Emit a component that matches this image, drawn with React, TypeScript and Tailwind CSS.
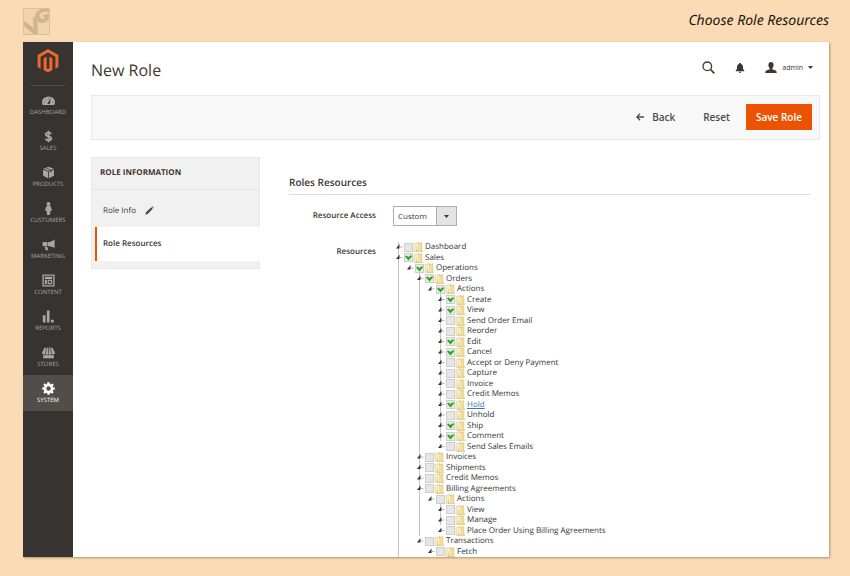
import type { ReactNode } from "react";

type Resource = { label: string; depth: number; checked?: boolean; active?: boolean };

const resources: Resource[] = [
  { label: "Dashboard", depth: 0 },
  { label: "Sales", depth: 0, checked: true },
  { label: "Operations", depth: 1, checked: true },
  { label: "Orders", depth: 2, checked: true },
  { label: "Actions", depth: 3, checked: true },
  { label: "Create", depth: 4, checked: true },
  { label: "View", depth: 4, checked: true },
  { label: "Send Order Email", depth: 4 },
  { label: "Reorder", depth: 4 },
  { label: "Edit", depth: 4, checked: true },
  { label: "Cancel", depth: 4, checked: true },
  { label: "Accept or Deny Payment", depth: 4 },
  { label: "Capture", depth: 4 },
  { label: "Invoice", depth: 4 },
  { label: "Credit Memos", depth: 4 },
  { label: "Hold", depth: 4, checked: true, active: true },
  { label: "Unhold", depth: 4 },
  { label: "Ship", depth: 4, checked: true },
  { label: "Comment", depth: 4, checked: true },
  { label: "Send Sales Emails", depth: 4 },
  { label: "Invoices", depth: 2 },
  { label: "Shipments", depth: 2 },
  { label: "Credit Memos", depth: 2 },
  { label: "Billing Agreements", depth: 2 },
  { label: "Actions", depth: 3 },
  { label: "View", depth: 4 },
  { label: "Manage", depth: 4 },
  { label: "Place Order Using Billing Agreements", depth: 4 },
  { label: "Transactions", depth: 2 },
  { label: "Fetch", depth: 3 },
];

const guideWidths = ["w-[11px]", "w-[10px]", "w-[11px]", "w-[10px]"];

/* A guide runs past a row when a later sibling exists at that depth. */
function hasGuide(index: number, depth: number) {
  if (depth === 0) return true;
  for (let i = index + 1; i < resources.length; i++) {
    if (resources[i].depth === depth) return true;
    if (resources[i].depth < depth) return false;
  }
  return false;
}

function Toggle({ line }: { line: boolean }) {
  return (
    <svg className="h-full w-[11px] shrink-0" viewBox="0 0 11 11" preserveAspectRatio="xMidYMid slice" aria-hidden="true">
      {line && <path d="M5.500 0V11" stroke="#c4c4c4" />}
      <path d="M7 5.500H9.500" stroke="#b4b4b4" />
      <path d="M6.500 2.500V7H3Z" fill="#333" />
    </svg>
  );
}

function Folder() {
  return (
    <svg className="h-[10px] w-[10px] shrink-0" viewBox="0 0 10 10" aria-hidden="true">
      <path d="M1 1.500L5.500 .5V8.500L1 9.500Z" fill="#f8edc2" stroke="#dccb90" strokeWidth=".6" />
      <path d="M5 1.500L8.800 .8V7.500L9.600 9.500H3Z" fill="#f1df9f" stroke="#d0b973" strokeWidth=".6" />
      <path d="M4.500 2V8" stroke="#fdf8e0" strokeWidth=".8" />
    </svg>
  );
}

function TreeRow({ item, index }: { item: Resource; index: number }) {
  const id = `resource-${index}`;
  return (
    <li className="flex h-[10px] items-center even:h-[11px]">
      {guideWidths.slice(0, item.depth).map((width, depth) => (
        <span key={depth} className={`${width} flex h-full shrink-0 pl-[5px]`}>
          {hasGuide(index, depth) && <span className="h-full border-l border-[#c4c4c4]" />}
        </span>
      ))}
      <Toggle line={hasGuide(index, item.depth)} />
      <span className="grid shrink-0 place-items-center">
        <input
          type="checkbox"
          defaultChecked={item.checked}
          aria-labelledby={id}
          className="peer col-start-1 row-start-1 size-[9px] appearance-none border border-[#cdcdcd] bg-[#e6e6e6] checked:bg-[#e3eedf]"
        />
        <svg className="pointer-events-none invisible col-start-1 row-start-1 size-[9px] peer-checked:visible" viewBox="0 0 9 9" aria-hidden="true">
          <path d="M1 3.500L2.500 2.500L4.300 4L6.800 2.200L8.300 3L4.500 7.500Z" fill="#2fa32b" />
        </svg>
      </span>
      <Folder />
      <a
        id={id}
        href="#"
        className={`ml-[2px] text-[8px] leading-[10px] whitespace-nowrap ${item.active ? "text-[#3a78b0] underline" : "text-[#333]"}`}
      >
        {item.label}
      </a>
    </li>
  );
}

const menu: { label: string; active?: boolean; icon: ReactNode }[] = [
  {
    label: "DASHBOARD",
    icon: (
      <>
        <path d="M1 13.500C.5 12.500 0 11.300 0 10A8 7 0 0 1 16 10C16 11.300 15.500 12.500 15 13.500Z" />
        <path d="M6.500 12L11 4.500L9.500 12.300Z" fill="#373330" />
        <path d="M2.500 10h1.200M4.200 6l.9.9M8 4.500v1M12.500 10h1.200" stroke="#373330" strokeWidth=".8" />
      </>
    ),
  },
  {
    label: "SALES",
    icon: (
      <path
        d="M11.300 5C10.800 3.800 9.700 3.200 8 3.200C6 3.200 4.700 4 4.700 5.500C4.700 8.600 11.500 7 11.500 10.300C11.500 11.900 10.100 12.800 8 12.800C6 12.800 4.800 12 4.400 10.700M8 .8V15.200"
        fill="none"
        stroke="currentColor"
        strokeWidth="2.200"
      />
    ),
  },
  {
    label: "PRODUCTS",
    icon: (
      <>
        <path d="M8 1L14.500 3.500L8 6.300L1.500 3.500Z" />
        <path d="M1.300 4.500L7.500 7.200V15L1.300 12Z" />
        <path d="M14.700 4.500L8.500 7.200V15L14.700 12Z" />
        <path d="M4.300 2.300L11.300 5.200V8" fill="none" stroke="#373330" strokeWidth=".9" />
      </>
    ),
  },
  {
    label: "CUSTOMERS",
    icon: (
      <>
        <circle cx="8" cy="2.500" r="2.500" />
        <path d="M5.500 5H10.500L12.300 10L11.200 11L10.300 10.300V12L9.700 16H6.300L5.700 12V10.300L4.800 11L3.700 10Z" />
      </>
    ),
  },
  {
    label: "MARKETING",
    icon: (
      <>
        <path d="M15.500 1.500V12.300C13 10.500 10.500 10 7.500 10V5C10.500 5 13 3.800 15.500 1.500Z" />
        <path d="M.8 5H6.700V10H.8Z" />
        <path d="M3.300 10.700H6.500L7.700 15H4.500Z" />
      </>
    ),
  },
  {
    label: "CONTENT",
    icon: (
      <>
        <path d="M.5 .5H15.500V15.500H.5ZM2.200 2.200V13.800H13.800V2.200Z" fillRule="evenodd" />
        <path d="M3.500 3.500H12.500V6H3.500ZM3.500 7H6V12.500H3.500ZM7 7H12.500V12.500H7Z" />
        <path d="M8.500 8.500H11V11H8.500Z" fill="#373330" />
      </>
    ),
  },
  {
    label: "REPORTS",
    icon: <path d="M1 6.500H4.300V15.500H1ZM6 .5H9.300V15.500H6ZM11 12H14.500V15.500H11Z" />,
  },
  {
    label: "STORES",
    icon: (
      <>
        <path d="M3 2H13L15.800 8A1.950 1.950 0 0 1 11.900 8.800A1.950 1.950 0 0 1 8 8.800A1.950 1.950 0 0 1 4.100 8.800A1.950 1.950 0 0 1 .2 8Z" />
        <path d="M1.500 11.300H14.500V15.200H1.500Z" />
        <path d="M5.500 2.500L4.300 9M8 2.500V9M10.500 2.500L11.700 9" stroke="#373330" strokeWidth=".9" />
      </>
    ),
  },
  {
    label: "SYSTEM",
    active: true,
    icon: (
      <path
        fillRule="evenodd"
        d="M6.600 .3H9.400L9.800 2.500L10.900 3L12.800 1.700L14.500 3.400L13.100 5.200L13.500 6.400L15.700 6.800V9.300L13.500 9.700L13.100 10.900L14.400 12.700L12.600 14.500L10.800 13.200L9.700 13.600L9.300 15.700H6.700L6.300 13.600L5.200 13.200L3.400 14.500L1.600 12.700L2.900 10.900L2.500 9.700L.3 9.300V6.800L2.500 6.400L3 5.200L1.600 3.400L3.400 1.600L5.200 3L6.200 2.500ZM8 5.300A2.700 2.700 0 1 0 8 10.700A2.700 2.700 0 1 0 8 5.300Z"
      />
    ),
  },
];

function Sidebar() {
  return (
    <nav className="w-[50px] shrink-0 bg-[#373330]">
      <div className="px-2">
        <a href="#" aria-label="Magento" className="flex h-11 justify-center border-b border-[#55504c] pt-[7px]">
          <svg className="h-6 w-[22px]" viewBox="0 0 22 24" fill="#ee672d" aria-hidden="true">
            <path d="M11 0L21.400 6V18L18.400 19.700V7.700L11 3.400L3.600 7.700V19.700L.6 18V6Z" />
            <path d="M6.600 9.200L9.600 7.500V19.300L11 20.100L12.400 19.300V7.500L15.400 9.200V21L11 23.600L6.600 21Z" />
          </svg>
        </a>
      </div>
      <ul className="pt-px">
        {menu.map((item) => (
          <li key={item.label}>
            <a
              href="#"
              className={`flex h-9 flex-col items-center pt-[7px] ${item.active ? "bg-[#524d49] text-white" : "text-[#aaa6a0]"}`}
            >
              <svg className="size-[13px]" viewBox="0 0 16 16" fill="currentColor" aria-hidden="true">
                {item.icon}
              </svg>
              <span className="text-[6px] leading-[10px]">{item.label}</span>
            </a>
          </li>
        ))}
      </ul>
    </nav>
  );
}

function Header() {
  return (
    <header className="flex h-[53px] items-center justify-between pr-4 pl-[18px] text-[#41362f]">
      <h1 className="pt-[2px] text-[16px] leading-6">New Role</h1>
      <div className="flex items-center pb-[2px]">
        <button type="button" aria-label="Search">
          <svg className="size-[13px]" viewBox="0 0 13 13" fill="none" stroke="currentColor" aria-hidden="true">
            <circle cx="5.300" cy="5.300" r="4.300" strokeWidth="1.300" />
            <path d="M8.500 8.500L12.300 12.300" strokeWidth="1.700" />
          </svg>
        </button>
        <button type="button" aria-label="Notifications" className="ml-5">
          <svg className="size-[10px]" viewBox="0 0 10 10" fill="currentColor" aria-hidden="true">
            <path d="M5 0C5.600 0 6 .4 6 1C7.600 1.500 8 2.800 8 4.500C8 6 8.500 6.800 9.300 7.600V8.200H.7V7.600C1.500 6.800 2 6 2 4.500C2 2.800 2.400 1.500 4 1C4 .4 4.400 0 5 0ZM3.800 8.800H6.200C6 9.600 5.600 10 5 10S4 9.600 3.800 8.800Z" />
          </svg>
        </button>
        <button type="button" className="ml-5 flex items-center">
          <svg className="h-[11px] w-3" viewBox="0 0 12 11" fill="currentColor" aria-hidden="true">
            <path d="M6 0C7.700 0 8.600 1.200 8.600 3C8.600 4.400 8 5.700 7.300 6.300V7.300L10.500 8.500C11.300 8.900 11.700 9.600 11.700 11H.3C.3 9.600 .7 8.900 1.500 8.500L4.700 7.300V6.300C4 5.700 3.400 4.400 3.400 3C3.400 1.200 4.300 0 6 0Z" />
          </svg>
          <span className="ml-[5px] text-[7px] leading-3">admin</span>
          <svg className="ml-[5px] h-[3px] w-[5px]" viewBox="0 0 5 3" fill="currentColor" aria-hidden="true">
            <path d="M0 0H5L2.500 3Z" />
          </svg>
        </button>
      </div>
    </header>
  );
}

function Toolbar() {
  return (
    <div className="mr-[9px] ml-[18px] flex h-[45px] items-center justify-end border border-[#e9e9e9] bg-[#f8f8f8] pr-[7px] pb-px text-[10px] leading-4 font-semibold text-[#514943]">
      <button type="button" className="flex items-center">
        <svg className="mr-2 size-[8px]" viewBox="0 0 8 8" fill="none" stroke="currentColor" strokeWidth="1.300" aria-hidden="true">
          <path d="M8 4H1M4 .8L.9 4L4 7.200" />
        </svg>
        Back
      </button>
      <button type="button" className="ml-7">Reset</button>
      <button type="button" className="ml-4 h-[26px] bg-[#eb5202] px-[10px] text-white">Save Role</button>
    </div>
  );
}

function RoleTabs() {
  return (
    <aside className="w-[169px] shrink-0 self-start border border-[#e9e9e9] bg-[#f1f1f1] pb-[7px] text-[8px] text-[#41362f]">
      <h2 className="h-8 border-b border-[#e5e5e5] pl-2 leading-[30px] font-bold">ROLE INFORMATION</h2>
      <a href="#" className="flex h-[37px] items-center pt-1 pl-[11px]">
        Role Info
        <svg className="ml-[9px] size-[9px]" viewBox="0 0 9 9" fill="#514943" aria-hidden="true">
          <path d="M.3 8.700L1 6.300L6.200 1.200L7.800 2.700L2.700 7.900ZM6.700 .8L7.300 .3L8.700 1.700L8.200 2.300Z" />
        </svg>
      </a>
      <a href="#" className="-mr-px ml-[3px] flex h-[34px] items-center border-l-2 border-[#eb5202] bg-white pl-[6px] font-semibold">
        Role Resources
      </a>
    </aside>
  );
}

function ResourcesPanel() {
  return (
    <section className="min-w-0 flex-1 pt-[17px] text-[#41362f]">
      <h2 className="border-b border-[#dfdbd7] pb-1 text-[10px] leading-4 font-semibold">Roles Resources</h2>
      <div className="mt-[11px] flex items-center">
        <label htmlFor="access" className="w-[87px] text-right text-[8px] leading-[10px] font-semibold">
          Resource Access
        </label>
        <div className="ml-[17px] grid">
          <select
            id="access"
            className="col-start-1 row-start-1 h-5 w-16 appearance-none border border-[#adadad] bg-white pl-1 text-[8px] leading-4"
          >
            <option>Custom</option>
            <option>All</option>
          </select>
          <span className="pointer-events-none col-start-1 row-start-1 grid w-[21px] place-items-center justify-self-end border border-[#adadad] bg-[#e3e3e3]">
            <svg className="h-[3px] w-[5px]" viewBox="0 0 5 3" fill="#41362f" aria-hidden="true">
              <path d="M0 0H5L2.500 3Z" />
            </svg>
          </span>
        </div>
      </div>
      <div className="mt-4 flex">
        <span id="resources" className="w-[87px] pt-[5px] text-right text-[8px] leading-[10px] font-semibold">
          Resources
        </span>
        <ul aria-labelledby="resources" className="ml-[17px]">
          {resources.map((item, index) => (
            <TreeRow key={index} item={item} index={index} />
          ))}
        </ul>
      </div>
    </section>
  );
}

export default function App() {
  return (
    <div className="min-h-screen bg-[#fadbb5] pr-[21px] pb-[19px] pl-[23px] font-['Open_Sans','Noto_Sans',sans-serif] [text-rendering:geometricPrecision]">
      <div className="flex h-[42px] items-center justify-between">
        <svg className="size-[27px]" viewBox="0 0 27 27" aria-hidden="true">
          <path d="M.5 .5H26.500V26.500H.5Z" fill="#f1d3aa" stroke="#dcc09a" />
          <path d="M1 13V18L10 26H15L14 10L10 9L10.500 20L4 15Z" fill="#cfb490" />
          <path d="M26 1H18C13.500 2.500 11.500 6 12.500 9.500C13.500 14 17.500 16 21 14.500C23.500 13.500 25 12 26 10V5.500L20 7L20.700 9.300L22.500 9C20.500 12 17 11.300 16.500 8C16.200 5 20 3 26 4Z" fill="#cfb490" />
        </svg>
        <p className="font-['Noto_Sans',sans-serif] text-[14px] leading-5 text-[#1c140c] italic">Choose Role Resources</p>
      </div>
      <div className="flex bg-white shadow-[1px_1px_2px_rgba(90,60,20,0.45)]">
        <Sidebar />
        <main className="min-w-0 flex-1">
          <Header />
          <Toolbar />
          <div className="flex gap-[29px] pt-[17px] pr-[19px] pl-[18px]">
            <RoleTabs />
            <ResourcesPanel />
          </div>
        </main>
      </div>
    </div>
  );
}
